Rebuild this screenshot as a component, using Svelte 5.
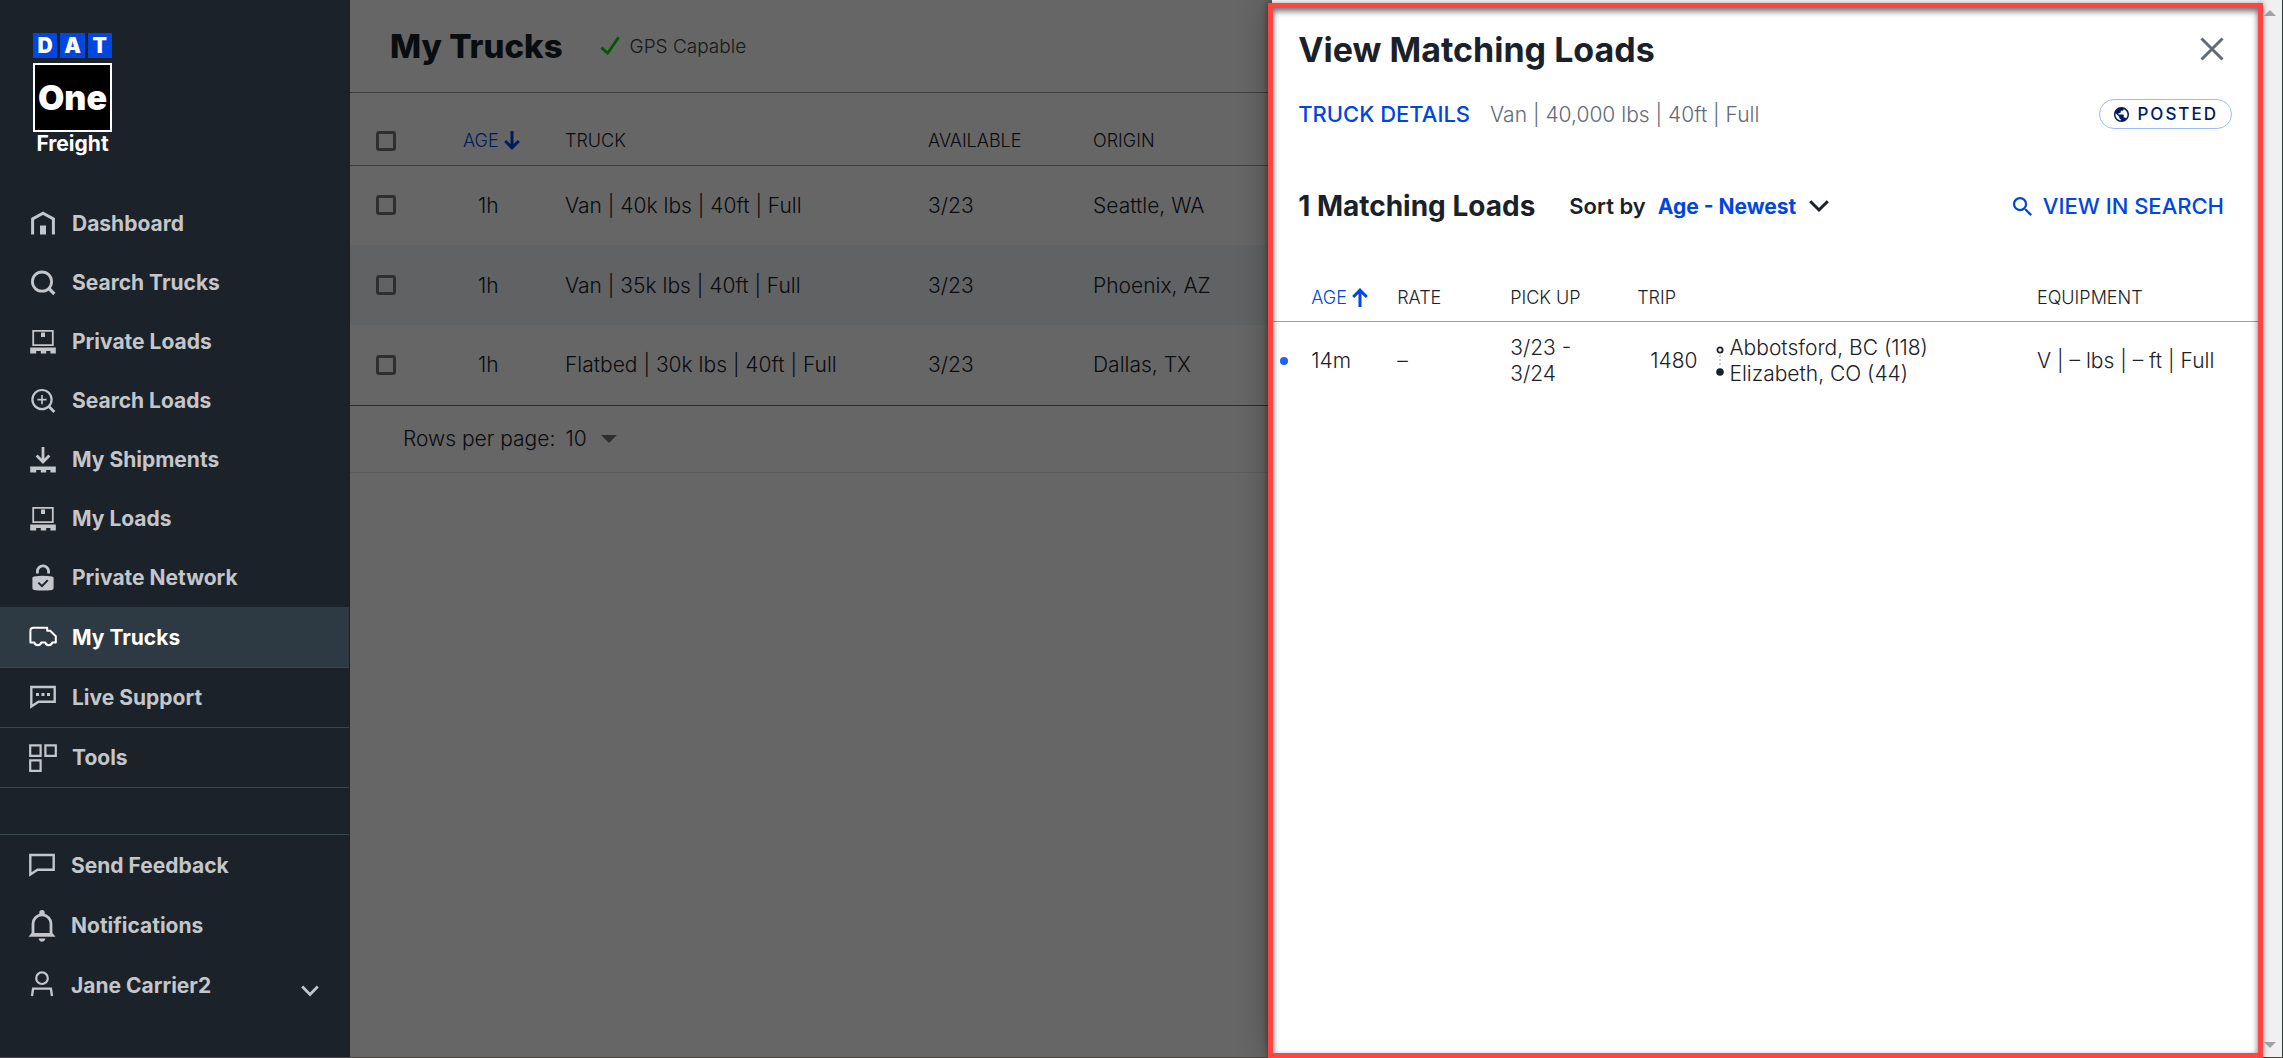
<script lang="ts">
	interface NavItem {
		label: string;
		icon: string;
		active?: boolean;
		divided?: boolean;
	}

	const mainNav: NavItem[] = [
		{ label: 'Dashboard', icon: 'home' },
		{ label: 'Search Trucks', icon: 'search' },
		{ label: 'Private Loads', icon: 'pallet' },
		{ label: 'Search Loads', icon: 'search-plus' },
		{ label: 'My Shipments', icon: 'shipments' },
		{ label: 'My Loads', icon: 'pallet' },
		{ label: 'Private Network', icon: 'lock' },
		{ label: 'My Trucks', icon: 'truck', active: true, divided: true },
		{ label: 'Live Support', icon: 'chat', divided: true },
		{ label: 'Tools', icon: 'tools', divided: true }
	];

	const footerNav: NavItem[] = [
		{ label: 'Send Feedback', icon: 'feedback' },
		{ label: 'Notifications', icon: 'bell' }
	];

	const trucks = [
		{ age: '1h', truck: 'Van | 40k lbs | 40ft | Full', available: '3/23', origin: 'Seattle, WA' },
		{ age: '1h', truck: 'Van | 35k lbs | 40ft | Full', available: '3/23', origin: 'Phoenix, AZ' },
		{ age: '1h', truck: 'Flatbed | 30k lbs | 40ft | Full', available: '3/23', origin: 'Dallas, TX' }
	];

	const loads = [
		{
			age: '14m',
			rate: '–',
			pickup: ['3/23 -', '3/24'],
			miles: 1480,
			from: 'Abbotsford, BC (118)',
			to: 'Elizabeth, CO (44)',
			equipment: 'V | – lbs | – ft | Full'
		}
	];

	let rowsPerPage = $state('10');
	let sortBy = $state('Age - Newest');
	let selected: boolean[] = $state(trucks.map(() => false));
	let allSelected = $derived(selected.every(Boolean));

	function toggleAll() {
		const next = !allSelected;
		selected = trucks.map(() => next);
	}
</script>

{#snippet navIcon(name: string)}
	<svg class="nav-icon" viewBox="0 0 28 28" fill="none" stroke="currentColor" stroke-width="2.4" aria-hidden="true">
		{#if name === 'home'}
			<path d="M3.6 24.5V9L14 3.2 24.4 9v15.5" stroke-width="3" />
			<path d="M11 15.5h6v9h-6z" fill="currentColor" stroke="none" />
		{:else if name === 'search'}
			<circle cx="13" cy="12.6" r="9.6" stroke-width="2.8" />
			<path d="M19.4 19l6 6" stroke-width="3.2" />
		{:else if name === 'search-plus'}
			<circle cx="13" cy="12.6" r="9.6" stroke-width="2.2" />
			<path d="M19.6 19.2l5.8 5.8" stroke-width="2.8" />
			<path d="M13 8v9.2M8.4 12.6h9.2" stroke-width="1.6" />
		{:else if name === 'pallet'}
			<path d="M4.2 2.8h19.6v14.4H4.2z" stroke-width="1.8" />
			<path d="M12 4.5h4v4.5h-4z" fill="currentColor" stroke="none" />
			<path d="M1.2 19.5h25.6v6h-5.4v-2.4h-4.2v2.4h-5.4v-2.4H7.2v2.4h-6z" fill="currentColor" stroke="none" />
		{:else if name === 'shipments'}
			<path d="M14 1v14M7.6 9.6L14 16l6.4-6.4" stroke-width="2.8" />
			<path d="M1.2 20.5h25.6v6h-5.4v-2.4h-4.2v2.4h-5.4v-2.4H7.2v2.4h-6z" fill="currentColor" stroke="none" />
		{:else if name === 'lock'}
			<path d="M8.4 9.5V7.4a5.6 5.6 0 0 1 11.2 0v2.1" stroke-width="2.8" />
			<path d="M5 12.5q9-1.6 18 0 1.6.3 1.6 1.8v9.8q0 1.6-1.6 1.9-9 1.2-18 0-1.6-.3-1.6-1.9v-9.8q0-1.5 1.6-1.8z" fill="currentColor" stroke="none" />
			<path d="M9.4 18.6l3.6 3.5 5.8-6" class="lock-tick" stroke-width="2" />
		{:else if name === 'truck'}
			<path d="M4.4 4.8h13.8v3h3l5.6 5.4v6.4h-3.6c-1 3.4-5.8 3.4-6.8 0h-4.2c-1 3.4-5.8 3.4-6.8 0H1.4V7.8q0-3 3-3z" stroke-width="2" stroke-linejoin="round" />
		{:else if name === 'chat'}
			<path d="M2.3 3h23.4v14.8H9.5L2.3 22.5z" />
			<path d="M7 9h3v3H7zM12.5 9h3v3h-3zM18 9h3v3h-3z" fill="currentColor" stroke="none" />
		{:else if name === 'feedback'}
			<path d="M2.3 4h23.4v14.8H9.5L2.3 23.5z" />
		{:else if name === 'tools'}
			<path d="M1.2 1.4h10.4v10.4H1.2zM16.4 1.4h10.4v10.4H16.4zM1.2 16.4h10.4v10.4H1.2z" stroke-width="2.2" />
		{:else if name === 'bell'}
			<path d="M5 23.6V12.8a9 9 0 0 1 18 0v10.8" stroke-width="2.8" />
			<path d="M.5 25.8L3.6 22h20.8l3.1 3.8z" fill="currentColor" stroke="none" />
			<path d="M11.3 4.5v-3Q11.3-1 14-1t2.7 2.5v3zM10.6 27.5h6.8q-1 3.2-3.4 3.2t-3.4-3.2z" fill="currentColor" stroke="none" />
		{:else if name === 'user'}
			<circle cx="14" cy="7.2" r="5.8" stroke-width="2.2" />
			<path d="M4 25l1.1-7.4h17.8L24 25" stroke-width="2.4" />
		{/if}
	</svg>
{/snippet}

<div class="shell">
	<aside class="sidebar">
		<div class="logo">
			<div class="logo-dat"><span>D</span><span>A</span><span>T</span></div>
			<div class="logo-one">One</div>
			<div class="logo-freight">Freight</div>
		</div>

		<nav class="nav" aria-label="Main">
			{#each mainNav as item}
				<a
					class="nav-item"
					class:nav-item--divided={item.divided}
					class:nav-item--active={item.active}
					href="#{item.icon}"
				>
					{@render navIcon(item.icon)}
					{item.label}
				</a>
			{/each}
		</nav>

		<nav class="nav nav--footer" aria-label="Account">
			{#each footerNav as item}
				<a class="nav-item" href="#{item.icon}">
					{@render navIcon(item.icon)}
					{item.label}
				</a>
			{/each}
			<button class="nav-item" type="button">
				{@render navIcon('user')}
				Jane Carrier2
				<svg class="nav-caret" viewBox="0 0 18 12" fill="none" stroke="currentColor" stroke-width="2.8" aria-hidden="true">
					<path d="M1.2 1.5L9 9.4l7.8-7.9" />
				</svg>
			</button>
		</nav>
	</aside>

	<div class="content">
		<main class="page">
			<header class="page-header">
				<h1>My Trucks</h1>
				<span class="gps">
					<svg viewBox="0 0 20 20" fill="none" stroke="currentColor" stroke-width="2.8" aria-hidden="true">
						<path d="M1.4 11.6l6.2 5.6L18.6 1.4" />
					</svg>
					GPS Capable
				</span>
			</header>

			<table class="trucks">
				<colgroup>
					<col class="col-check" />
					<col class="col-age" />
					<col class="col-truck" />
					<col class="col-available" />
					<col />
				</colgroup>
				<thead>
					<tr>
						<th><input type="checkbox" aria-label="Select all trucks" checked={allSelected} onchange={toggleAll} /></th>
						<th>
							<button class="sort" type="button">
								AGE
								<svg viewBox="0 0 16 20" fill="none" stroke="currentColor" stroke-width="3" aria-hidden="true">
									<path d="M8 0v16M1.2 10L8 16.8l6.8-6.8" />
								</svg>
							</button>
						</th>
						<th>TRUCK</th>
						<th>AVAILABLE</th>
						<th>ORIGIN</th>
					</tr>
				</thead>
				<tbody>
					{#each trucks as row, i}
						<tr>
							<td><input type="checkbox" aria-label="Select {row.truck}" bind:checked={selected[i]} /></td>
							<td class="age">{row.age}</td>
							<td>{row.truck}</td>
							<td>{row.available}</td>
							<td>{row.origin}</td>
						</tr>
					{/each}
				</tbody>
			</table>

			<div class="pager">
				<label for="rows-per-page">Rows per page:</label>
				<select id="rows-per-page" bind:value={rowsPerPage}>
					<option>10</option>
				</select>
				<svg viewBox="0 0 16 8" aria-hidden="true"><path d="M0 0h16L8 8z" fill="currentColor" /></svg>
			</div>
		</main>

		<div class="scrim"></div>

		<section class="drawer" aria-labelledby="drawer-title">
			<header class="drawer-header">
				<h2 id="drawer-title">View Matching Loads</h2>
				<button class="close" type="button" aria-label="Close">
					<svg viewBox="0 0 24 24" fill="none" stroke="currentColor" stroke-width="3" aria-hidden="true">
						<path d="M1.5 1.5l21 21M22.5 1.5l-21 21" />
					</svg>
				</button>
			</header>

			<div class="details">
				<button class="link" type="button">TRUCK DETAILS</button>
				<span class="details-text">Van | 40,000 lbs | 40ft | Full</span>
				<span class="posted">
					<svg viewBox="2 2 20 20" fill="currentColor" aria-hidden="true">
						<path d="M12 2C6.48 2 2 6.48 2 12s4.48 10 10 10 10-4.48 10-10S17.52 2 12 2zm-1 17.93c-3.95-.49-7-3.85-7-7.93 0-.62.08-1.21.21-1.79L9 15v1c0 1.1.9 2 2 2v1.93zm6.9-2.54c-.26-.81-1-1.39-1.9-1.39h-1v-3c0-.55-.45-1-1-1H8v-2h2c.55 0 1-.45 1-1V7h2c1.1 0 2-.9 2-2v-.41c2.93 1.19 5 4.06 5 7.41 0 2.08-.8 3.97-2.1 5.39z" />
					</svg>
					POSTED
				</span>
			</div>

			<div class="toolbar">
				<h3>1 Matching Loads</h3>
				<label for="sort-by">Sort by</label>
				<select id="sort-by" bind:value={sortBy}>
					<option>Age - Newest</option>
				</select>
				<svg class="caret" viewBox="0 0 20 12" fill="none" stroke="currentColor" stroke-width="3" aria-hidden="true">
					<path d="M1.2 1.2L10 10l8.8-8.8" />
				</svg>
				<button class="link link--search" type="button">
					<svg viewBox="3 3 17.5 17.5" fill="currentColor" aria-hidden="true">
						<path d="M15.5 14h-.79l-.28-.27C15.41 12.59 16 11.11 16 9.5 16 5.91 13.09 3 9.5 3S3 5.91 3 9.5 5.91 16 9.5 16c1.61 0 3.09-.59 4.23-1.57l.27.28v.79l5 4.99L20.49 19l-4.99-5zm-6 0C7.01 14 5 11.99 5 9.5S7.01 5 9.5 5 14 7.01 14 9.5 11.99 14 9.5 14z" />
					</svg>
					VIEW IN SEARCH
				</button>
			</div>

			<table class="loads">
				<colgroup>
					<col class="col-load-age" />
					<col class="col-rate" />
					<col class="col-pickup" />
					<col />
					<col class="col-equipment" />
				</colgroup>
				<thead>
					<tr>
						<th>
							<button class="sort" type="button">
								AGE
								<svg viewBox="0 0 16 20" fill="none" stroke="currentColor" stroke-width="3" aria-hidden="true">
									<path d="M8 20V4M1.2 10L8 3.2l6.8 6.8" />
								</svg>
							</button>
						</th>
						<th>RATE</th>
						<th>PICK UP</th>
						<th>TRIP</th>
						<th>EQUIPMENT</th>
					</tr>
				</thead>
				<tbody>
					{#each loads as load}
						<tr>
							<td><span class="new-load">{load.age}</span></td>
							<td>{load.rate}</td>
							<td>{load.pickup[0]}<br />{load.pickup[1]}</td>
							<td>
								<div class="trip">
									<span>{load.miles}</span>
									<svg viewBox="0 0 8 32" aria-hidden="true">
										<circle cx="4" cy="5" r="2.6" fill="none" stroke="currentColor" stroke-width="1.8" />
										<path d="M4 10v12" stroke="#9aa1a8" stroke-dasharray="2 2" />
										<circle cx="4" cy="27" r="3.8" fill="currentColor" />
									</svg>
									<span>{load.from}<br />{load.to}</span>
								</div>
							</td>
							<td>{load.equipment}</td>
						</tr>
					{/each}
				</tbody>
			</table>
		</section>

		<div class="scrollbar" aria-hidden="true">
			<svg viewBox="0 0 12 6"><path d="M0 6h12L6 0z" fill="#a3a3a3" /></svg>
			<svg viewBox="0 0 12 6"><path d="M0 0h12L6 6z" fill="#a3a3a3" /></svg>
		</div>

		<div class="highlight"></div>
	</div>
</div>

<style>
	:global(body) {
		margin: 0;
		font-family: Inter, 'Liberation Sans', sans-serif;
		font-size: 21px;
		font-weight: 300;
		color: #1b2128;
	}

	* {
		box-sizing: border-box;
	}

	h1,
	h2,
	h3 {
		margin: 0;
	}

	button,
	select {
		padding: 0;
		border: 0;
		background: none;
		font: inherit;
		color: inherit;
		cursor: pointer;
	}

	select {
		appearance: none;
	}

	svg {
		flex: none;
		overflow: visible;
	}

	.shell {
		display: flex;
		min-height: 100vh;
		border-bottom: 1px solid #4f463e;
	}

	/* ── Sidebar ── */
	.sidebar {
		flex: none;
		width: 350px;
		padding-top: 33px;
		background: #1b2229;
		border-right: 1px solid #171e2c;
		color: #c3c6ca;
	}

	.logo {
		display: flex;
		flex-direction: column;
		width: 79px;
		height: 161px;
		margin-left: 33px;
		color: #fff;
		text-align: center;
	}

	.logo-dat {
		display: grid;
		grid-template-columns: repeat(3, 1fr);
		gap: 3px;
		margin-bottom: 5px;
		font-size: 21px;
		font-weight: 900;
		line-height: 25px;
	}
	.logo-dat span { background: #0046e0; }

	.logo-one {
		background: #000;
		border: 2px solid #fff;
		font-size: 34px;
		font-weight: 900;
		line-height: 65px;
	}

	.logo-freight {
		font-size: 21px;
		font-weight: 700;
		line-height: 24px;
	}

	.nav-item {
		display: flex;
		align-items: center;
		gap: 15px;
		width: 100%;
		height: 59px;
		padding: 0 30px 0 29px;
		font-weight: 700;
		color: inherit;
		text-decoration: none;
	}

	.nav-item--divided {
		height: 60px;
		border-bottom: 1px solid #3a4650;
	}

	.nav-item--active {
		height: 61px;
		background: #2d3943;
		color: #fff;
	}

	.nav--footer {
		margin-top: 46px;
		border-top: 1px solid #3a4650;
	}
	.nav--footer .nav-item {
		height: 60px;
		padding-left: 28px;
	}

	.nav-icon {
		width: 28px;
		height: 28px;
	}
	.lock-tick { stroke: #1b2229; }

	.nav-caret {
		width: 18px;
		height: 12px;
		margin: 12px 0 0 auto;
	}

	/* ── Page behind the drawer ── */
	.content {
		position: relative;
		flex: 1;
		min-width: 0;
	}

	.page-header {
		display: flex;
		align-items: center;
		gap: 37px;
		height: 93px;
		padding-left: 40px;
		border-bottom: 1px solid #9aa1a8;
	}
	.page-header h1 {
		font-size: 33px;
		font-weight: 800;
	}

	.gps {
		display: flex;
		align-items: center;
		gap: 10px;
		font-size: 19px;
		color: #3a4148;
	}
	.gps svg {
		width: 20px;
		height: 20px;
		color: #00dc00;
	}

	table {
		width: 100%;
		table-layout: fixed;
		border-collapse: collapse;
	}

	th,
	td {
		padding: 0;
		text-align: left;
	}

	th {
		font-size: 18px;
		font-weight: 300;
	}

	.trucks thead tr {
		height: 72px;
		border-bottom: 1px solid #9aa1a8;
	}
	.trucks th {
		padding-top: 24px;
	}
	.trucks tbody tr { height: 80px; }
	.trucks tbody tr:nth-child(even) { background: #f3f5f8; }
	.trucks tbody tr:last-child { border-bottom: 1px solid #5f7080; }

	.col-check { width: 113px; }
	.col-age { width: 102px; }
	.col-truck { width: 363px; }
	.col-available { width: 165px; }

	.trucks .age { padding-left: 15px; }

	input[type='checkbox'] {
		appearance: none;
		display: block;
		width: 20px;
		height: 20px;
		margin: 0 0 0 26px;
		border: 3px solid #777;
		border-radius: 3px;
	}
	input[type='checkbox']:checked { background: #0046e0; }

	.sort {
		display: flex;
		align-items: center;
		gap: 5px;
		color: #0046e0;
	}
	.sort svg {
		width: 16px;
		height: 20px;
	}

	.pager {
		display: flex;
		align-items: center;
		height: 67px;
		padding-left: 53px;
		border-bottom: 1px solid #e6e8ea;
	}
	.pager select { margin: 0 14px 0 10px; }
	.pager svg {
		width: 16px;
		height: 8px;
		color: #777;
	}

	.scrim {
		position: absolute;
		inset: 0;
		background: rgba(0, 0, 0, 0.6);
	}

	/* ── Drawer ── */
	.drawer {
		position: absolute;
		top: 0;
		right: 25px;
		bottom: 0;
		width: 51%;
		background: #fff;
		box-shadow: 0 0 30px rgba(0, 0, 0, 0.4);
	}

	.drawer-header,
	.details,
	.toolbar {
		display: flex;
		align-items: center;
		padding: 0 26px;
	}

	.drawer-header {
		justify-content: space-between;
		height: 98px;
	}
	.drawer-header h2 {
		font-size: 34px;
		font-weight: 700;
	}

	.close {
		margin-right: 8px;
		color: #5f6b78;
	}
	.close svg {
		display: block;
		width: 24px;
		height: 24px;
	}

	.link {
		font-size: 22px;
		font-weight: 500;
		color: #0046e0;
	}

	.details { height: 32px; }

	.details-text {
		margin-left: 20px;
		color: #5f6b78;
	}

	.posted {
		display: flex;
		align-items: center;
		gap: 8px;
		height: 30px;
		margin-left: auto;
		padding: 0 13px 0 14px;
		border: 1px solid #9dbbf7;
		border-radius: 15px;
		font-size: 17px;
		font-weight: 500;
		letter-spacing: 2px;
		color: #001a66;
	}
	.posted svg {
		width: 15px;
		height: 15px;
	}

	.toolbar {
		height: 152px;
		font-weight: 700;
	}
	.toolbar h3 {
		margin-right: 34px;
		font-size: 28px;
	}
	.toolbar select {
		margin: 0 12px;
		color: #0046e0;
	}
	.toolbar label {
		font-size: 22px;
		font-weight: 600;
	}

	.caret {
		width: 20px;
		height: 12px;
	}

	.link--search {
		display: flex;
		align-items: center;
		gap: 11px;
		margin-left: auto;
		padding-right: 8px;
	}
	.link--search svg {
		width: 19px;
		height: 19px;
	}

	.loads thead tr {
		height: 39px;
		border-bottom: 1px solid #9aa1a8;
	}
	.loads th {
		padding-bottom: 8px;
	}
	.loads tbody tr { height: 80px; }
	.loads td { line-height: 26px; }
	.loads th:first-child { padding-left: 39px; }

	.col-load-age { width: 125px; }
	.col-rate { width: 113px; }
	.col-pickup { width: 127px; }
	.col-equipment { width: 221px; }

	.new-load {
		display: flex;
		align-items: center;
		gap: 23px;
		padding-left: 8px;
	}
	.new-load::before {
		content: '';
		width: 8px;
		height: 8px;
		border-radius: 50%;
		background: #1a63ff;
	}

	.trip {
		display: flex;
		align-items: center;
		gap: 5px;
		padding-left: 13px;
	}
	.trip svg {
		width: 8px;
		height: 32px;
		margin-left: 14px;
	}

	/* ── Window edge ── */
	.scrollbar {
		position: absolute;
		top: 0;
		right: 0;
		bottom: 0;
		display: flex;
		flex-direction: column;
		justify-content: space-between;
		align-items: center;
		width: 25px;
		padding: 10px 0 9px;
		background: #f0f0f0;
		border-right: 1px solid #24403a;
	}
	.scrollbar svg {
		width: 12px;
		height: 6px;
	}

	.highlight {
		position: absolute;
		top: 3px;
		right: 20px;
		bottom: -1px;
		width: calc(51% + 9px);
		border: 5px solid #ff4444;
		box-shadow:
			0 0 6px rgba(0, 0, 0, 0.4),
			inset 0 3px 6px rgba(0, 0, 0, 0.6);
		pointer-events: none;
	}
</style>
